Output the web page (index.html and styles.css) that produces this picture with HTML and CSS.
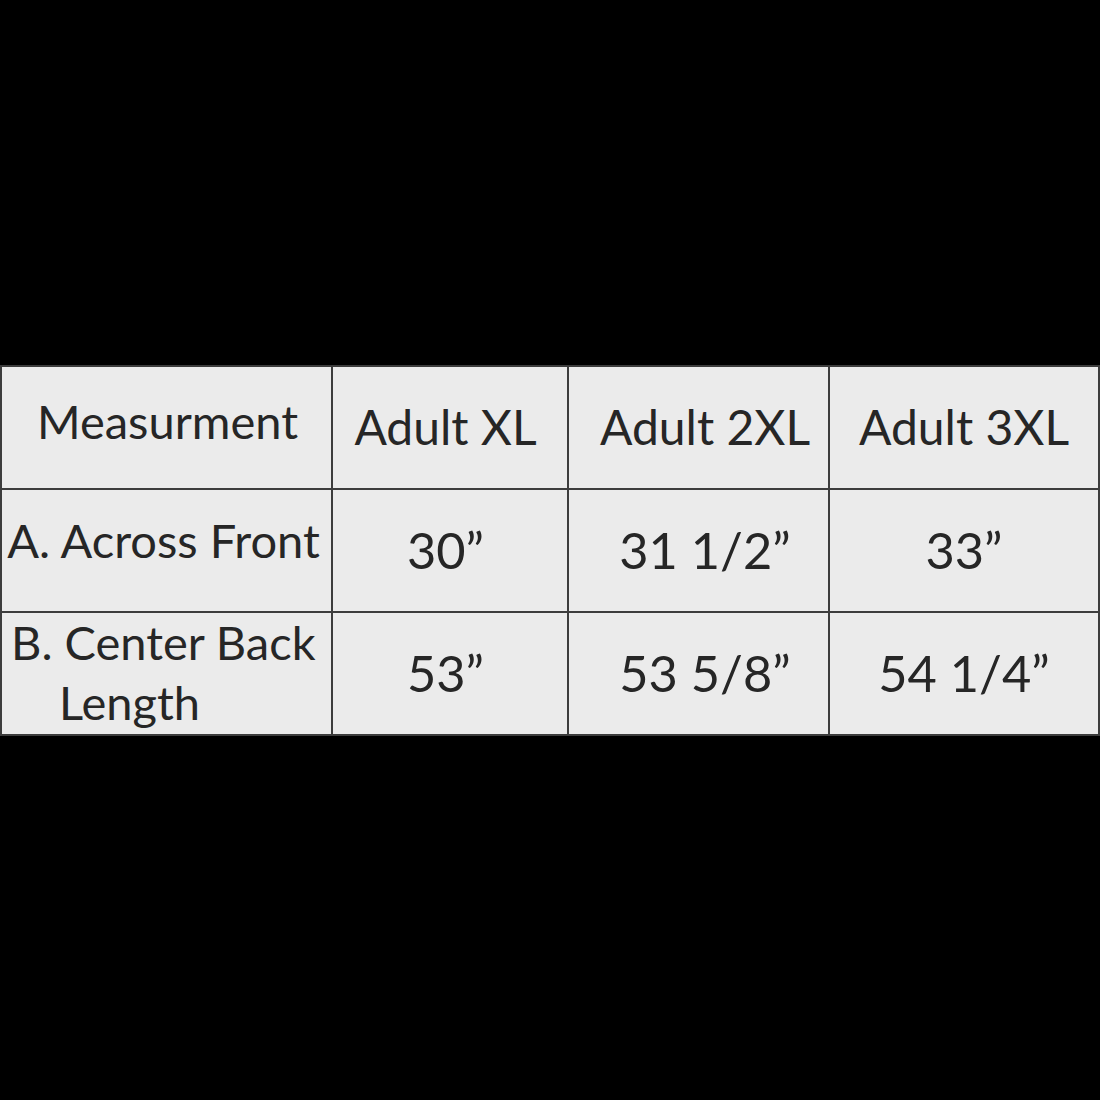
FILE: index.html
```html
<!DOCTYPE html>
<html>
<head>
<meta charset="utf-8">
<link rel="stylesheet" href="styles.css">
</head>
<body>
<table class="sizes">
  <colgroup>
    <col class="c1"><col class="c2"><col class="c3"><col class="c4">
  </colgroup>
  <tr class="head">
    <td class="label"><span class="lift lift-head">Measurment</span></td>
    <td class="xl">Adult XL</td>
    <td class="xxl">Adult 2XL</td>
    <td>Adult 3XL</td>
  </tr>
  <tr>
    <td class="label"><span class="lift lift-front">A. Across Front</span></td>
    <td class="xl">30”</td>
    <td class="xxl">31 1/2”</td>
    <td>33”</td>
  </tr>
  <tr>
    <td class="label"><div class="two"><span>B. Center Back</span><span class="indent">Length</span></div></td>
    <td class="xl">53”</td>
    <td class="xxl">53 5/8”</td>
    <td>54 1/4”</td>
  </tr>
</table>
</body>
</html>
```

FILE: styles.css
```css
html, body {
  margin: 0;
  padding: 0;
  background: #000;
}
body {
  min-height: 1100px;
  display: flex;
  align-items: center;
  justify-content: center;
  font-family: Lato, "Open Sans", sans-serif;
}
.sizes {
  width: 1098px;
  border-collapse: collapse;
  background: #ebebeb;
  color: #262626;
  table-layout: fixed;
}
.c1 { width: 331px; }
.c2 { width: 236px; }
.c3 { width: 261px; }
.c4 { width: 270px; }
.sizes td {
  border: 2px solid #3c3c3c;
  height: 121px;
  padding: 0;
  text-align: center;
  vertical-align: middle;
  font-size: 50.5px;
  line-height: 1;
  white-space: nowrap;
}
.sizes td.xl {
  padding-right: 9px;
}
.sizes td.xxl {
  padding-left: 13px;
}
.head td {
  font-size: 48px;
}
.sizes td.label {
  font-size: 47px;
}
.lift {
  display: inline-block;
  position: relative;
}
.lift-head {
  top: -6px;
  left: 1px;
}
.lift-front {
  top: -10px;
  left: -3px;
}
.two {
  display: flex;
  flex-direction: column;
  align-items: flex-start;
  padding-left: 9px;
  line-height: 60px;
  position: relative;
  top: -1px;
}
.indent {
  padding-left: 48px;
}
```
